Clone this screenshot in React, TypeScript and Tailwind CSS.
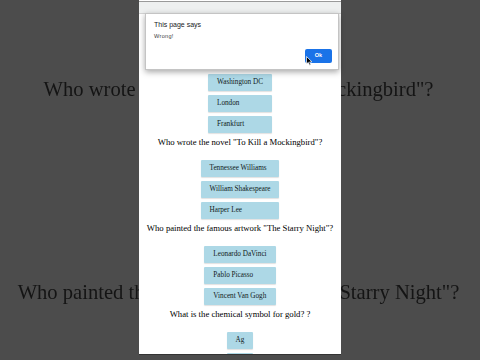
import React from 'react';

interface Question {
  text: string;
  answers: string[];
}

const questions: Question[] = [
  { text: 'What is the capital of Germany?', answers: ['Washington DC', 'London', 'Frankfurt'] },
  { text: 'Who wrote the novel "To Kill a Mockingbird"?', answers: ['Tennessee Williams', 'William Shakespeare', 'Harper Lee'] },
  { text: 'Who painted the famous artwork "The Starry Night"?', answers: ['Leonardo DaVinci', 'Pablo Picasso', 'Vincent Van Gogh'] },
  { text: 'What is the chemical symbol for gold? ?', answers: ['Ag', 'Au'] },
];

const serif = "font-['Liberation_Serif',serif]";

const AnswerGroup: React.FC<{ answers: string[] }> = ({ answers }) => (
  <div className="flex flex-col gap-[4px] self-center">
    {answers.map((a) => (
      <button
        key={a}
        className={`h-[17px] px-[9px] text-left text-[7.2px] leading-none text-[#111a20] bg-[#add8e6] rounded-[1px] shadow-[0_1px_1px_rgba(0,0,0,0.12)] ${serif}`}
      >
        {a}
      </button>
    ))}
  </div>
);

export default function App() {
  return (
    <div className="relative w-[480px] h-[360px] overflow-hidden bg-[#4c4c4c]">
      {/* blurred background copy of the page */}
      <div className={`absolute inset-0 flex flex-col items-center pt-[77px] pr-[3px] text-[20.6px] leading-[24px] text-[#141414] blur-[0.6px] ${serif}`}>
        <p className="whitespace-nowrap">Who wrote the novel "To Kill a Mockingbird"?</p>
        <p className="whitespace-nowrap mt-[179px]">Who painted the famous artwork "The Starry Night"?</p>
      </div>

      {/* phone page */}
      <div className="relative mx-auto w-[202px] h-[355px] bg-white overflow-hidden border-b border-[#333]">
        <div className="h-[13px] bg-[#eef0f0] border-t-[1px] border-t-[#9a9a9a] mt-[1px] border-b border-b-[#d4d4d4]" />
        <div className="flex flex-col pt-[60px]">
          <AnswerGroup answers={questions[0].answers} />
          {questions.slice(1).map((q) => (
            <React.Fragment key={q.text}>
              <p className={`mt-[3px] mb-[12px] text-center text-[8.7px] leading-[12px] text-black whitespace-nowrap ${serif}`}>
                {q.text}
              </p>
              <AnswerGroup answers={q.answers} />
            </React.Fragment>
          ))}
        </div>
      </div>

      {/* alert dialog */}
      <div className="absolute left-[145px] top-[13px] w-[194px] h-[57px] bg-white border border-[#c4c4c4] shadow-[0_2px_6px_rgba(0,0,0,0.35)] font-['Liberation_Sans',Arial,sans-serif]">
        <p className="absolute left-[8px] top-[7px] text-[7px] leading-none text-[#202124]">This page says</p>
        <p className="absolute left-[8px] top-[20px] text-[5.6px] leading-none text-[#3c4043] tracking-[0.3px]">Wrong!</p>
        <button className="absolute right-[6px] bottom-[6px] w-[27px] h-[14px] rounded-[2px] bg-[#1a73e8] text-white text-[5.5px] font-bold leading-none">
          Ok
        </button>
      </div>

      {/* mouse pointer */}
      <svg className="absolute left-[306px] top-[56px]" width="7" height="10" viewBox="0 0 7 10">
        <path d="M0.5 0.5 L0.5 8 L2.3 6.3 L3.6 9.3 L4.8 8.8 L3.6 5.9 L6 5.9 Z" fill="#000" stroke="#fff" strokeWidth="0.7" />
      </svg>
    </div>
  );
}
